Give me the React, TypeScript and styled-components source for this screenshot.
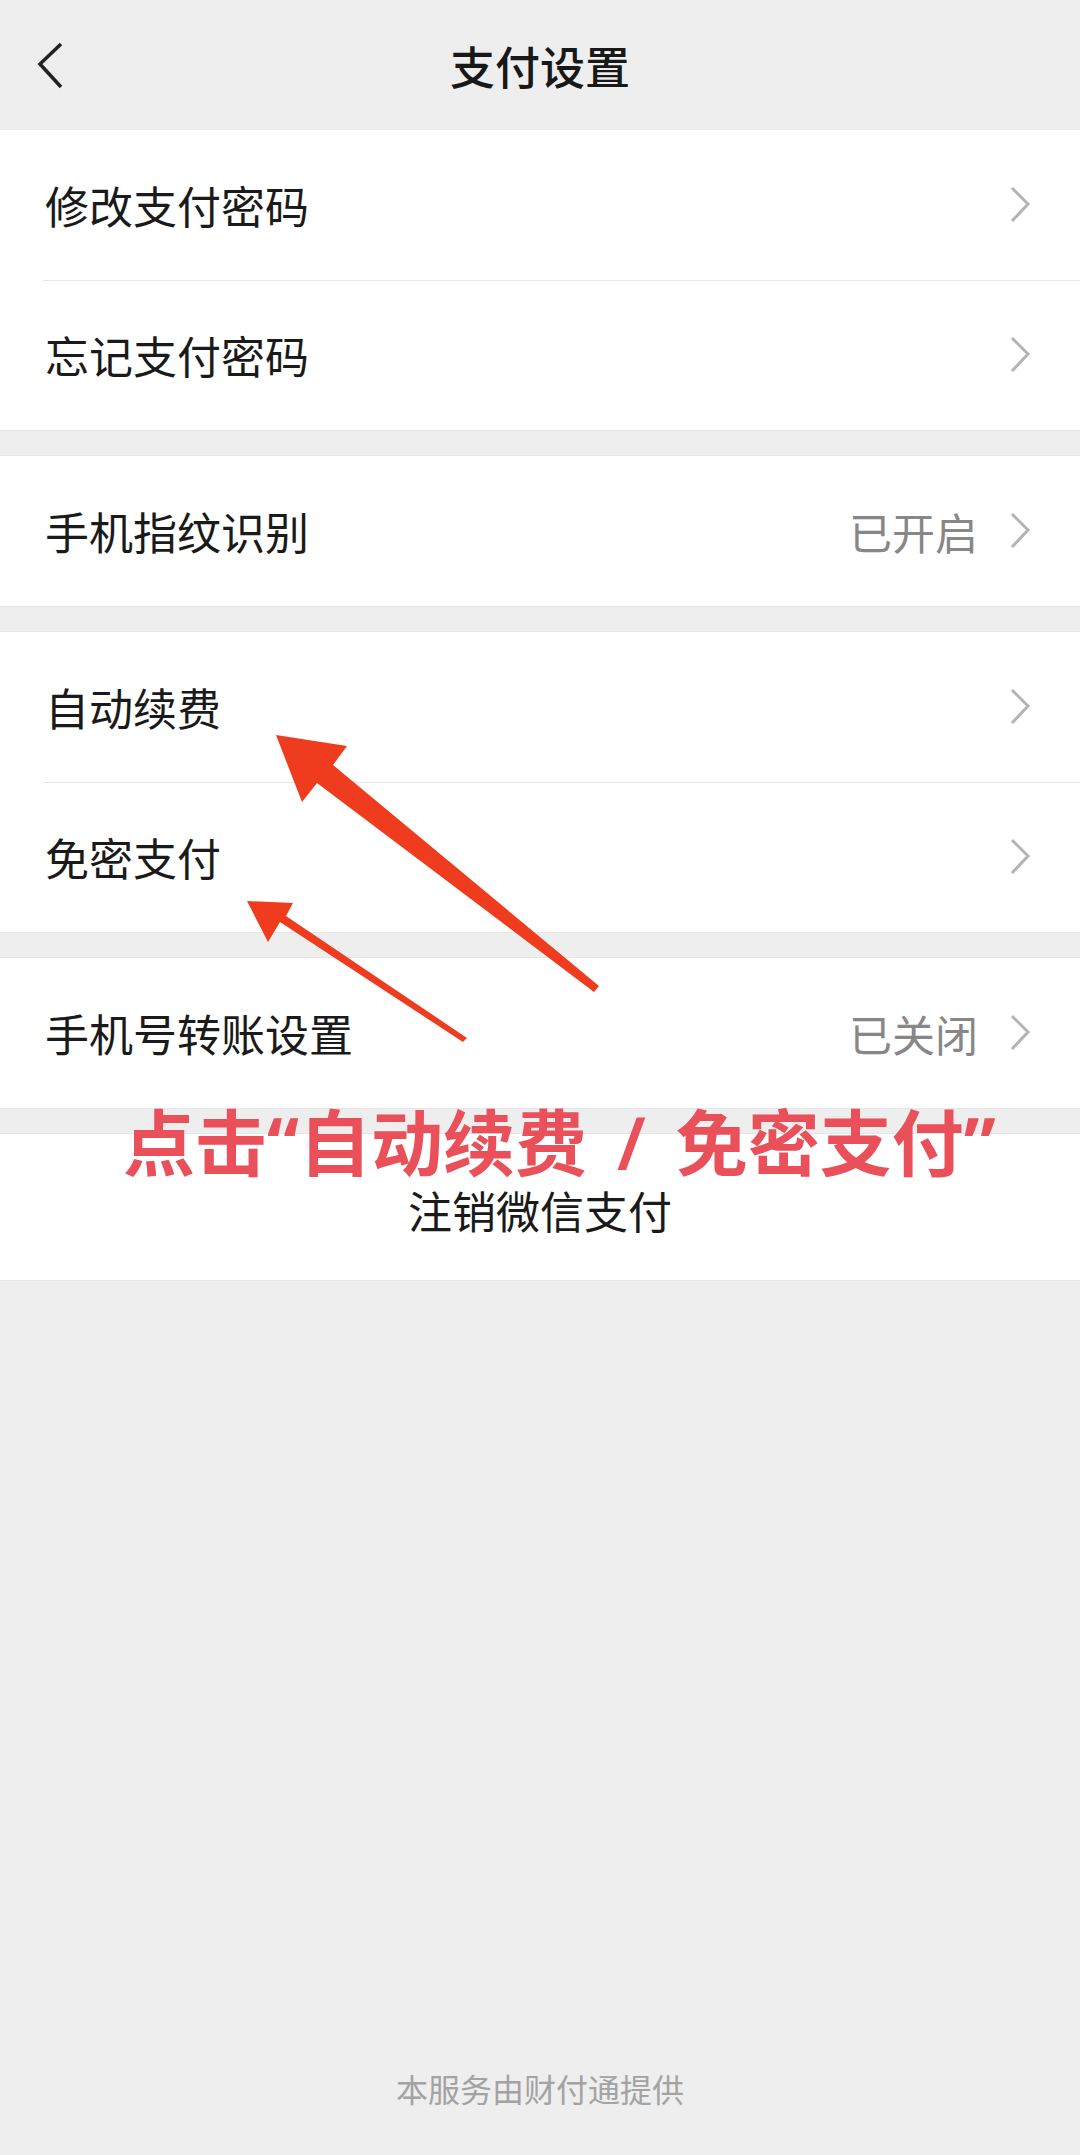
import styled, { createGlobalStyle } from 'styled-components';

interface IRow {
  label: string;
  value?: string;
}

const GROUPS: IRow[][] = [
  [{ label: '修改支付密码' }, { label: '忘记支付密码' }],
  [{ label: '手机指纹识别', value: '已开启' }],
  [{ label: '自动续费' }, { label: '免密支付' }],
  [{ label: '手机号转账设置', value: '已关闭' }],
];

const GlobalStyle = createGlobalStyle`
  html, body {
    margin: 0;
    padding: 0;
    background: #eeeeee;
  }
  body {
    font-family: "Noto Sans CJK SC", "Noto Sans", sans-serif;
    -webkit-font-smoothing: antialiased;
  }
`;

export default function App() {
  return (
    <>
      <GlobalStyle />
      <Page>
        <Header>
          <BackButton>
            <svg width="30" height="50" viewBox="0 0 30 50">
              <polyline points="24,4 3,24 24,47" fill="none" stroke="#222" strokeWidth="3.5" />
            </svg>
          </BackButton>
          <Title>支付设置</Title>
        </Header>

        <Groups>
          {GROUPS.map((rows, i) => (
            <Card key={i}>
              {rows.map((row, j) => (
                <Row key={row.label} $divider={j > 0}>
                  <Label>{row.label}</Label>
                  <Right>
                    {row.value && <Value>{row.value}</Value>}
                    <Chevron />
                  </Right>
                </Row>
              ))}
            </Card>
          ))}
          <Card>
            <CenterRow>注销微信支付</CenterRow>
          </Card>
        </Groups>

        <Footer>本服务由财付通提供</Footer>

        {/* 안내용 주석 레이어 */}
        <Arrows width="1080" height="1300" viewBox="0 0 1080 1300">
          <polygon
            points="276,735 347,746 333,765 599,986 594,992 317,783 302,802"
            fill="#ef3b1e"
          />
          <polygon
            points="247,901 293,903 286,916 467,1038 463,1042 280,922 268,942"
            fill="#ef3b1e"
          />
        </Arrows>
        <Annotation>
          点击“自动续费<Slash>/</Slash>免密支付”
        </Annotation>
      </Page>
    </>
  );
}

function Chevron() {
  return (
    <svg width="24" height="40" viewBox="0 0 24 40">
      <polyline points="4,3 20,19 4,36" fill="none" stroke="#b4b4b4" strokeWidth="3" />
    </svg>
  );
}

const Page = styled.div`
  position: relative;
  min-height: 2155px;
  display: flex;
  flex-direction: column;
  background: #eeeeee;
  overflow: hidden;
`;

const Header = styled.div`
  position: relative;
  height: 130px;
  display: flex;
  align-items: center;
  justify-content: center;
`;

const BackButton = styled.div`
  position: absolute;
  left: 37px;
  top: 40px;
  display: flex;
`;

const Title = styled.div`
  font-size: 45px;
  font-weight: 500;
  color: #181818;
`;

const Groups = styled.div`
  display: flex;
  flex-direction: column;
  gap: 24px;
`;

const Card = styled.div`
  background: #fff;
  border-top: 1px solid #e6e6e6;
  border-bottom: 1px solid #e6e6e6;
  &:first-child {
    border-top: none;
  }
`;

const Row = styled.div<{ $divider: boolean }>`
  position: relative;
  height: 150px;
  display: flex;
  align-items: center;
  justify-content: space-between;
  padding: 0 48px 0 45px;
  box-sizing: border-box;
  &::before {
    content: '';
    display: ${(p) => (p.$divider ? 'block' : 'none')};
    position: absolute;
    top: 0;
    left: 43px;
    right: 0;
    height: 1px;
    background: #e6e6e6;
  }
`;

const Label = styled.span`
  font-size: 44px;
  color: #1a1a1a;
`;

const Right = styled.div`
  display: flex;
  align-items: center;
  gap: 30px;
`;

const Value = styled.span`
  font-size: 43px;
  color: #878787;
`;

const CenterRow = styled.div`
  height: 146px;
  display: flex;
  align-items: center;
  justify-content: center;
  padding-top: 6px;
  box-sizing: border-box;
  font-size: 44px;
  line-height: 44px;
  color: #1a1a1a;
`;

const Footer = styled.div`
  margin-top: auto;
  padding-bottom: 44px;
  text-align: center;
  font-size: 32px;
  line-height: 46px;
  color: #a3a3a3;
`;

const Arrows = styled.svg`
  position: absolute;
  left: 0;
  top: 0;
  pointer-events: none;
`;

const Annotation = styled.div`
  position: absolute;
  left: 123px;
  top: 1106px;
  font-family: "Noto Sans", "Noto Sans CJK SC", sans-serif;
  font-size: 72px;
  font-weight: 700;
  line-height: 72px;
  color: #e9505a;
  white-space: nowrap;
  pointer-events: none;
`;

const Slash = styled.span`
  display: inline-block;
  padding: 0 30px;
  font-weight: 600;
`;
